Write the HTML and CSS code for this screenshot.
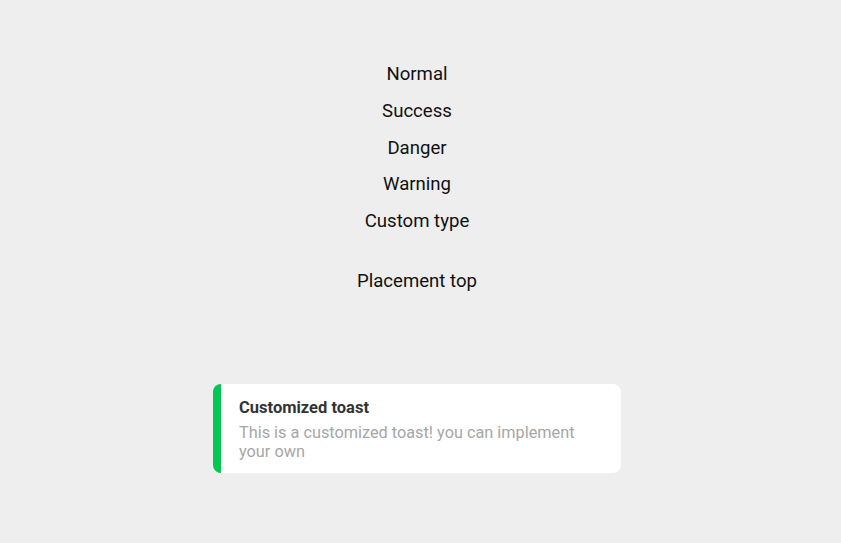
FILE: index.html
```html
<!DOCTYPE html>
<html>
<head>
<meta charset="utf-8">
<link rel="stylesheet" href="styles.css">
</head>
<body>
<div class="screen">
  <div class="menu">
    <div class="item">Normal</div>
    <div class="item">Success</div>
    <div class="item">Danger</div>
    <div class="item">Warning</div>
    <div class="item">Custom type</div>
    <div class="item item-gap">Placement top</div>
  </div>
  <div class="toast">
    <div class="toast-title">Customized toast</div>
    <div class="toast-msg">This is a customized toast! you can implement your own</div>
  </div>
</div>
</body>
</html>
```

FILE: styles.css
```css
html, body {
  margin: 0;
  padding: 0;
  background: #eeeeee;
}
body {
  font-family: Roboto, "Noto Sans", sans-serif;
  width: 841px;
  height: 543px;
  overflow: hidden;
}
.screen {
  position: relative;
  width: 834px;
  height: 543px;
}
.menu {
  display: flex;
  flex-direction: column;
  align-items: center;
  padding-top: 56px;
}
.item {
  font-size: 18.6px;
  line-height: 21px;
  padding: 8px 0;
  color: #111;
  height: 21px;
  box-sizing: content-box;
  margin-bottom: -0.25px;
}
.item-gap {
  margin-top: 23px;
}
.toast {
  position: absolute;
  left: 213px;
  top: 384px;
  width: 408px;
  height: 89px;
  box-sizing: border-box;
  background: #ffffff;
  border-radius: 8px;
  border-left: 8px solid #00c851;
  padding: 14px 20px 12px 18px;
}
.toast-title {
  font-size: 16.5px;
  font-weight: bold;
  color: #333333;
  line-height: 19px;
  margin-bottom: 6px;
}
.toast-msg {
  font-size: 16.3px;
  line-height: 19px;
  color: #a6a6a6;
  max-width: 350px;
}
```
